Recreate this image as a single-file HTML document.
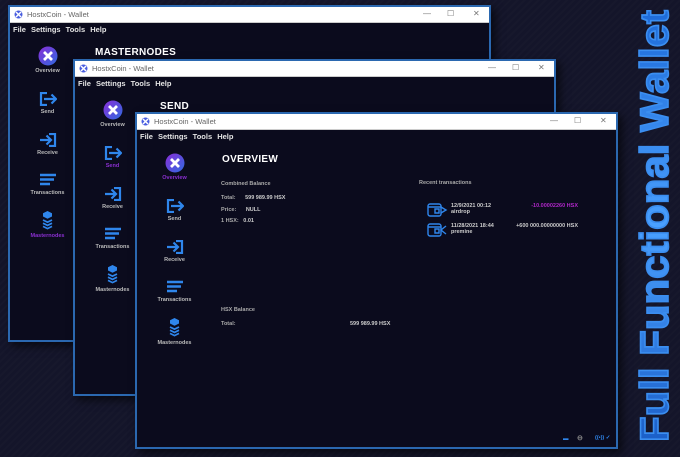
<!DOCTYPE html>
<html><head><meta charset="utf-8"><style>
*{margin:0;padding:0;box-sizing:border-box}
body{width:680px;height:457px;overflow:hidden;background:#14152a;background-image:repeating-linear-gradient(135deg,rgba(255,255,255,0.012) 0 2px,transparent 2px 5px);font-family:"Liberation Sans",sans-serif;position:relative}
.win{position:absolute;width:483px;height:337px;background:#0b0b1d;border:2px solid #2b68b0;box-shadow:4px 4px 8px rgba(0,0,0,.6)}
.tb{position:absolute;left:0;top:0;right:0;height:16px;background:#fff;border-bottom:1px solid #ccc}
.tb .t{position:absolute;left:17px;top:3px;font-size:7.5px;color:#666}
.tb .lg{position:absolute;left:4px;top:3px}
.tb .c{position:absolute;top:2px;font-size:8px;color:#777}
.mn{position:absolute;left:3px;top:18px;font-size:7.5px;color:#e4e4e4;word-spacing:3px;font-weight:bold}
.it{position:absolute;width:75px;text-align:center;font-size:5.5px;color:#bbb;font-weight:bold}
.it svg{display:block;margin:0 auto}
.it.a{color:#8a2fd0}
.h{position:absolute;left:85px;top:40px;font-size:10px;font-weight:bold;color:#fff;letter-spacing:.3px}
.s{position:absolute;font-size:5.5px;color:#aaa;font-weight:bold}
.w{color:#ccc}
</style></head><body>

<svg width="0" height="0" style="position:absolute"><defs>
<linearGradient id="lg" x1="0" y1="0" x2="1" y2="1"><stop offset="0" stop-color="#8a2ed8"/><stop offset="1" stop-color="#2f6ae0"/></linearGradient>
</defs></svg>

<div class="win" style="left:8px;top:5px">
 <div class="tb"><svg class="lg" width="9" height="9"><circle cx="4.5" cy="4.5" r="4" fill="#4a5ee0"/><path d="M2 2L7 7M7 2L2 7" stroke="#fff" stroke-width="1.5"/></svg><span class="t">HostxCoin - Wallet</span><span class="c" style="left:413px">—</span><span class="c" style="left:437px">☐</span><span class="c" style="left:463px">✕</span></div>
 <div class="mn">File Settings Tools Help</div>
 <div class="h">MASTERNODES</div>
 <div class="it" style="top:39px;left:0"><svg width="20" height="20"><circle cx="10" cy="10" r="9.5" fill="url(#lg)"/><path d="M6 6L14 14M14 6L6 14" stroke="#fff" stroke-width="2.8"/></svg><div style="margin-top:2px">Overview</div></div>
 <div class="it" style="top:85px"><svg width="18" height="14"><path d="M8 1H2V13H8M5 7H17M12.5 2.5L17 7L12.5 11.5" fill="none" stroke="#2f86ec" stroke-width="2.2"/></svg><div style="margin-top:3px">Send</div></div>
 <div class="it" style="top:126px"><svg width="18" height="14"><path d="M10 1H16V13H10M1 7H12M7.5 2.5L12 7L7.5 11.5" fill="none" stroke="#2f86ec" stroke-width="2.2"/></svg><div style="margin-top:3px">Receive</div></div>
 <div class="it" style="top:166px"><svg width="18" height="13"><path d="M1 2H17M1 6.5H15M1 11H11" stroke="#2f86ec" stroke-width="2.4"/></svg><div style="margin-top:4px">Transactions</div></div>
 <div class="it a" style="top:204px"><svg width="11" height="19"><path d="M5.5 0L10 2.2V5.5L5.5 7.7L1 5.5V2.2Z" fill="#2f86ec"/><path d="M1 9L5.5 11.2L10 9M1 12.2L5.5 14.4L10 12.2M1 15.4L5.5 17.6L10 15.4" fill="none" stroke="#2f86ec" stroke-width="1.7"/></svg><div style="margin-top:3px">Masternodes</div></div>
</div>

<div class="win" style="left:73px;top:59px">
 <div class="tb"><svg class="lg" width="9" height="9"><circle cx="4.5" cy="4.5" r="4" fill="#4a5ee0"/><path d="M2 2L7 7M7 2L2 7" stroke="#fff" stroke-width="1.5"/></svg><span class="t">HostxCoin - Wallet</span><span class="c" style="left:413px">—</span><span class="c" style="left:437px">☐</span><span class="c" style="left:463px">✕</span></div>
 <div class="mn">File Settings Tools Help</div>
 <div class="h">SEND</div>
 <div class="it" style="top:39px;left:0"><svg width="20" height="20"><circle cx="10" cy="10" r="9.5" fill="url(#lg)"/><path d="M6 6L14 14M14 6L6 14" stroke="#fff" stroke-width="2.8"/></svg><div style="margin-top:2px">Overview</div></div>
 <div class="it a" style="top:85px"><svg width="18" height="14"><path d="M8 1H2V13H8M5 7H17M12.5 2.5L17 7L12.5 11.5" fill="none" stroke="#2f86ec" stroke-width="2.2"/></svg><div style="margin-top:3px">Send</div></div>
 <div class="it" style="top:126px"><svg width="18" height="14"><path d="M10 1H16V13H10M1 7H12M7.5 2.5L12 7L7.5 11.5" fill="none" stroke="#2f86ec" stroke-width="2.2"/></svg><div style="margin-top:3px">Receive</div></div>
 <div class="it" style="top:166px"><svg width="18" height="13"><path d="M1 2H17M1 6.5H15M1 11H11" stroke="#2f86ec" stroke-width="2.4"/></svg><div style="margin-top:4px">Transactions</div></div>
 <div class="it" style="top:204px"><svg width="11" height="19"><path d="M5.5 0L10 2.2V5.5L5.5 7.7L1 5.5V2.2Z" fill="#2f86ec"/><path d="M1 9L5.5 11.2L10 9M1 12.2L5.5 14.4L10 12.2M1 15.4L5.5 17.6L10 15.4" fill="none" stroke="#2f86ec" stroke-width="1.7"/></svg><div style="margin-top:3px">Masternodes</div></div>
</div>

<div class="win" style="left:135px;top:112px">
 <div class="tb"><svg class="lg" width="9" height="9"><circle cx="4.5" cy="4.5" r="4" fill="#4a5ee0"/><path d="M2 2L7 7M7 2L2 7" stroke="#fff" stroke-width="1.5"/></svg><span class="t">HostxCoin - Wallet</span><span class="c" style="left:413px">—</span><span class="c" style="left:437px">☐</span><span class="c" style="left:463px">✕</span></div>
 <div class="mn">File Settings Tools Help</div>
 <div class="h">OVERVIEW</div>
 <div class="it a" style="top:39px;left:0"><svg width="20" height="20"><circle cx="10" cy="10" r="9.5" fill="url(#lg)"/><path d="M6 6L14 14M14 6L6 14" stroke="#fff" stroke-width="2.8"/></svg><div style="margin-top:2px">Overview</div></div>
 <div class="it" style="top:85px"><svg width="18" height="14"><path d="M8 1H2V13H8M5 7H17M12.5 2.5L17 7L12.5 11.5" fill="none" stroke="#2f86ec" stroke-width="2.2"/></svg><div style="margin-top:3px">Send</div></div>
 <div class="it" style="top:126px"><svg width="18" height="14"><path d="M10 1H16V13H10M1 7H12M7.5 2.5L12 7L7.5 11.5" fill="none" stroke="#2f86ec" stroke-width="2.2"/></svg><div style="margin-top:3px">Receive</div></div>
 <div class="it" style="top:166px"><svg width="18" height="13"><path d="M1 2H17M1 6.5H15M1 11H11" stroke="#2f86ec" stroke-width="2.4"/></svg><div style="margin-top:4px">Transactions</div></div>
 <div class="it" style="top:204px"><svg width="11" height="19"><path d="M5.5 0L10 2.2V5.5L5.5 7.7L1 5.5V2.2Z" fill="#2f86ec"/><path d="M1 9L5.5 11.2L10 9M1 12.2L5.5 14.4L10 12.2M1 15.4L5.5 17.6L10 15.4" fill="none" stroke="#2f86ec" stroke-width="1.7"/></svg><div style="margin-top:3px">Masternodes</div></div>

 <div class="s" style="left:84px;top:67px">Combined Balance</div>
 <div class="s" style="left:84px;top:81px">Total: <span class="w" style="margin-left:8px">599 989.99 HSX</span></div>
 <div class="s" style="left:84px;top:93px">Price: <span class="w" style="margin-left:8px">NULL</span></div>
 <div class="s" style="left:84px;top:104px">1 HSX: <span class="w" style="margin-left:3px">0.01</span></div>
 <div class="s" style="left:84px;top:193px">HSX Balance</div>
 <div class="s" style="left:84px;top:207px">Total:</div>
 <div class="s w" style="left:213px;top:207px">599 989.99 HSX</div>

 <div class="s" style="left:282px;top:66px">Recent transactions</div>
 <svg style="position:absolute;left:290px;top:88px" width="22" height="36"><g fill="none" stroke="#2f86ec" stroke-width="1.4"><rect x="1" y="2" width="13" height="12" rx="2"/><path d="M1 5H14M14 5L19 8L14 11M8 7H12V11H8Z"/><rect x="1" y="22" width="13" height="12" rx="2"/><path d="M1 25H14M19 24L14 28L19 32M8 27H12V31H8Z"/></g></svg>
 <div class="s w" style="left:314px;top:89px">12/9/2021 00:12<br>airdrop</div>
 <div class="s" style="left:370px;top:89px;width:71px;text-align:right;color:#b027c8">-10.00002260 HSX</div>
 <div class="s w" style="left:314px;top:109px">11/28/2021 18:44<br>premine</div>
 <div class="s w" style="left:360px;top:109px;width:81px;text-align:right">+600 000.00000000 HSX</div>

 <div class="s" style="left:426px;top:322px;color:#2f86ec">▬</div>
 <div class="s" style="left:440px;top:320px;font-size:7px;color:#888">⊖</div>
 <div class="s" style="left:458px;top:321px;color:#2f86ec">((•)) ✓</div>
</div>

<svg style="position:absolute;left:620px;top:0" width="60" height="457">
 <defs><linearGradient id="tg" x1="0" y1="0" x2="1" y2="0"><stop offset="0" stop-color="#1b5fc8"/><stop offset=".5" stop-color="#4aa0ff"/><stop offset="1" stop-color="#1e6bd8"/></linearGradient></defs>
 <text transform="translate(48,442) rotate(-90)" textLength="432" lengthAdjust="spacingAndGlyphs" font-family="Liberation Sans" font-weight="bold" font-size="40" fill="url(#tg)" stroke="#3b8ef0" stroke-width="1.6">Full Functional Wallet</text>
</svg>
</body></html>
